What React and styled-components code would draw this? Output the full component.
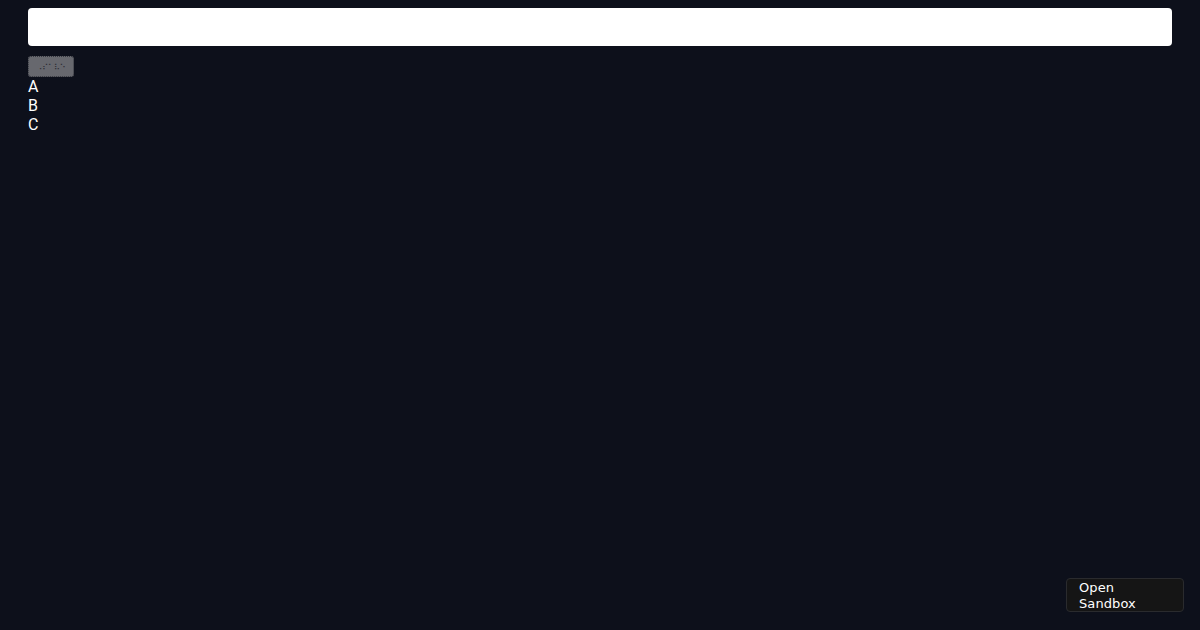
import React from "react";
import styled, { createGlobalStyle } from "styled-components";

const Global = createGlobalStyle`
  html, body { margin: 0; padding: 0; background: #0d101b; }
  #root { min-height: 630px; }
`;
const Page = styled.main`
  box-sizing: border-box;
  height: 630px;
  padding: 8px 28px 0;
  background: #0d101b;
  color: #fff;
  font-family: Roboto, sans-serif;
  font-size: 16px;
  position: relative;
`;
const Field = styled.input`
  display: block;
  box-sizing: border-box;
  width: 100%;
  height: 38px;
  border: 0;
  border-radius: 4px;
  background: #fff;
`;
const SubmitButton = styled.button`
  display: block;
  box-sizing: border-box;
  width: 46px;
  height: 21px;
  margin-top: 10px;
  padding: 3px 0 0;
  border: 1px dotted #33353d;
  border-radius: 3px;
  background: #67686e;
  color: #2c2d35;
  font-family: "DejaVu Sans", sans-serif;
  font-size: 8px;
  line-height: 16px;
  white-space: nowrap;
`;
const List = styled.div`
  display: flex;
  flex-direction: column;
`;
const Item = styled.div`
  line-height: 19px;
`;
const SandboxLink = styled.a`
  position: absolute;
  right: 16px;
  bottom: 18px;
  box-sizing: border-box;
  width: 118px;
  height: 34px;
  padding: 1px 12px;
  border: 1px solid #2a2b2e;
  border-radius: 4px;
  background: #151515;
  color: #fff;
  font-family: "DejaVu Sans", sans-serif;
  font-size: 13px;
  letter-spacing: 0.1px;
  line-height: 16px;
`;

export default function App() {
  return (
    <>
      <Global />
      <Page>
        <Field aria-label="Search" />
        <SubmitButton disabled>⠠⠎⠁⠧⠑</SubmitButton>
        <List>
          <Item>A</Item>
          <Item>B</Item>
          <Item>C</Item>
        </List>
        <SandboxLink>Open Sandbox</SandboxLink>
      </Page>
    </>
  );
}
